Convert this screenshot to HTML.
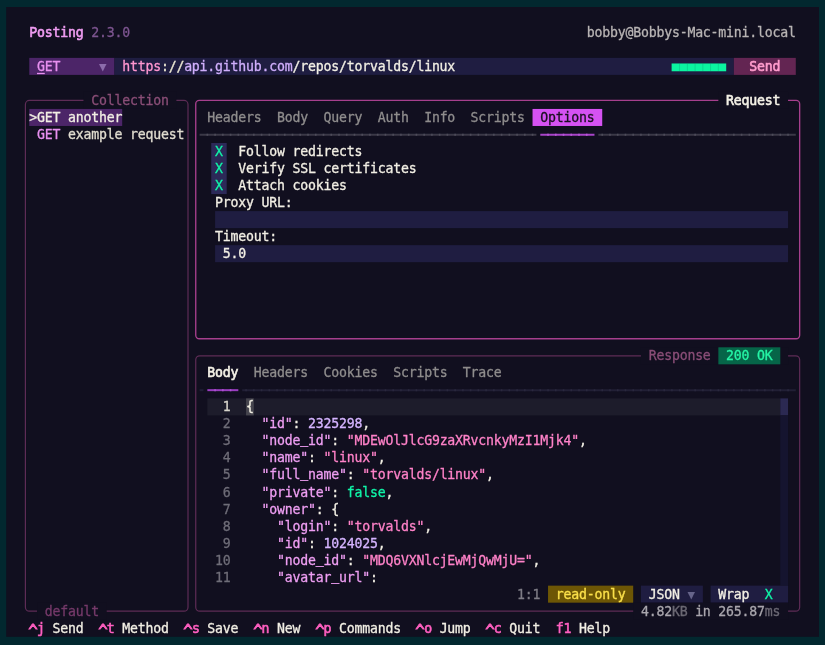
<!DOCTYPE html>
<html lang="en"><head><meta charset="utf-8"><title>Posting</title>
<style>
html,body{margin:0;padding:0;background:#02282f;}
body{width:825px;height:645px;overflow:hidden;position:relative;}
#term{position:absolute;left:0;top:0;width:825px;height:645px;overflow:hidden;
font-family:"DejaVu Sans Mono","Liberation Mono",monospace;font-size:13.2px;line-height:17.025px;}
#g{position:absolute;left:0;top:0;}
#tx{position:absolute;left:0;top:0;width:825px;height:645px;will-change:transform;}
.t{position:absolute;white-space:pre;-webkit-text-stroke:0.3px;height:17.025px;letter-spacing:-0.197px;}
.u{position:relative;top:-2px;}
.c{display:inline-block;transform:translateY(2.5px) scale(1.2,1.35);}
.bd{font-weight:normal;-webkit-text-stroke:0.6px;}
.tri{font-size:12.5px;letter-spacing:0;width:7.742px;text-align:center;-webkit-text-stroke:0;}
</style></head><body>
<div id="term">
<svg id="g" width="825" height="645" viewBox="0 0 825 645">
<rect x="6.2" y="7" width="812.8" height="629.8" fill="#110f1f"/>
<rect x="29.277" y="57.875" width="85.167" height="17.025" fill="#4c2568"/>
<rect x="37.02" y="72.837" width="7.742" height="1.3" fill="#e890f0"/>
<rect x="114.445" y="57.875" width="619.4" height="17.025" fill="#1f1d41"/>
<rect x="671.605" y="63.475" width="54.597" height="7.8" fill="#0bf5a0"/>
<rect x="679.147" y="63.475" width="0.9" height="7.8" fill="#0a8f6a" opacity="0.3"/>
<rect x="686.89" y="63.475" width="0.9" height="7.8" fill="#0a8f6a" opacity="0.3"/>
<rect x="694.632" y="63.475" width="0.9" height="7.8" fill="#0a8f6a" opacity="0.3"/>
<rect x="702.375" y="63.475" width="0.9" height="7.8" fill="#0a8f6a" opacity="0.3"/>
<rect x="710.117" y="63.475" width="0.9" height="7.8" fill="#0a8f6a" opacity="0.3"/>
<rect x="717.86" y="63.475" width="0.9" height="7.8" fill="#0a8f6a" opacity="0.3"/>
<rect x="733.845" y="57.875" width="61.94" height="17.025" fill="#632552"/>
<rect x="25.406" y="100.437" width="162.593" height="510.75" rx="4" fill="none" stroke="#5e2c56" stroke-width="1.2"/>
<rect x="83.475" y="91.925" width="92.91" height="17.025" fill="#110f1f"/>
<rect x="37.02" y="602.675" width="69.683" height="17.025" fill="#110f1f"/>
<rect x="29.277" y="108.95" width="92.91" height="17.025" fill="#4c2568"/>
<rect x="195.741" y="100.437" width="603.915" height="238.35" rx="3.5" fill="none" stroke="#a63f8d" stroke-width="1.35"/>
<rect x="718.36" y="91.925" width="69.683" height="17.025" fill="#110f1f"/>
<rect x="532.54" y="108.95" width="69.683" height="17.025" fill="#d552f2"/>
<line x1="199.613" y1="134.787" x2="536.411" y2="134.787" stroke="#3b3947" stroke-width="2"/>
<line x1="206.555" y1="134.787" x2="533.44" y2="134.787" stroke="#4e4c5a" stroke-width="2" stroke-dasharray="1.6 6.143"/>
<line x1="598.351" y1="134.787" x2="795.785" y2="134.787" stroke="#3b3947" stroke-width="2"/>
<line x1="601.423" y1="134.787" x2="788.942" y2="134.787" stroke="#4e4c5a" stroke-width="2" stroke-dasharray="1.6 6.143"/>
<line x1="540.282" y1="134.787" x2="594.48" y2="134.787" stroke="#a844c8" stroke-width="2"/>
<line x1="547.225" y1="134.787" x2="587.637" y2="134.787" stroke="#ba58da" stroke-width="2" stroke-dasharray="1.6 6.143"/>
<rect x="211.226" y="143" width="15.485" height="51.075" fill="#2c2958"/>
<rect x="215.097" y="211.1" width="572.945" height="17.025" fill="#1f1d41"/>
<rect x="215.097" y="245.15" width="572.945" height="17.025" fill="#1f1d41"/>
<rect x="195.741" y="355.812" width="603.915" height="255.375" rx="4" fill="none" stroke="#5e2c56" stroke-width="1.2"/>
<rect x="640.935" y="347.3" width="147.107" height="17.025" fill="#110f1f"/>
<rect x="718.36" y="347.3" width="61.94" height="17.025" fill="#066548"/>
<line x1="199.613" y1="390.162" x2="203.484" y2="390.162" stroke="#211f35" stroke-width="2"/>
<line x1="207.355" y1="390.162" x2="238.325" y2="390.162" stroke="#9a3ec0" stroke-width="2"/>
<line x1="214.297" y1="390.162" x2="231.483" y2="390.162" stroke="#ae52d2" stroke-width="2" stroke-dasharray="1.6 6.143"/>
<line x1="242.196" y1="390.162" x2="795.785" y2="390.162" stroke="#211f35" stroke-width="2"/>
<line x1="245.267" y1="390.162" x2="788.942" y2="390.162" stroke="#2a283e" stroke-width="2" stroke-dasharray="1.6 6.143"/>
<rect x="207.355" y="398.375" width="572.945" height="17.025" fill="#1d1c2b"/>
<rect x="780.3" y="398.375" width="7.742" height="17.025" fill="#2b2952"/>
<rect x="780.3" y="415.4" width="7.742" height="170.25" fill="#15142f"/>
<rect x="246.067" y="398.375" width="7.743" height="17.025" fill="#46454e"/>
<rect x="548.025" y="585.65" width="85.167" height="17.025" fill="#6d5605"/>
<rect x="640.935" y="585.65" width="61.94" height="17.025" fill="#1f1d41"/>
<rect x="710.617" y="585.65" width="77.425" height="17.025" fill="#1f1d41"/>
<rect x="633.192" y="602.675" width="154.85" height="17.025" fill="#110f1f"/>
</svg>
<div id="tx">
<span class="t bd" style="left:29.277px;top:23.825px;color:#ee9bf0;">Posting</span>
<span class="t" style="left:91.217px;top:23.825px;color:#7d5590;">2.3.0</span>
<span class="t" style="left:586.737px;top:23.825px;color:#b8b4b4;">bobby@Bobbys-Mac-mini.local</span>
<span class="t" style="left:37.02px;top:57.875px;color:#e890f0;">GET</span>
<span class="t tri" style="left:98.96px;top:57.875px;color:#8c6cab;">▼</span>
<span class="t" style="left:122.187px;top:57.875px;color:#ff96d0;">https</span>
<span class="t" style="left:160.9px;top:57.875px;color:#ebe7d2;">://</span>
<span class="t" style="left:184.127px;top:57.875px;color:#cfaefb;">api.github.com</span>
<span class="t" style="left:292.522px;top:57.875px;color:#f2efe4;">/repos/torvalds/linux</span>
<span class="t bd" style="left:749.33px;top:57.875px;color:#ff9ccd;">Send</span>
<span class="t" style="left:91.217px;top:91.925px;color:#8a4e77;">Collection</span>
<span class="t" style="left:44.762px;top:602.675px;color:#763a6a;">default</span>
<span class="t" style="left:29.277px;top:108.95px;color:#f2efe4;">&gt;</span>
<span class="t" style="left:37.02px;top:108.95px;color:#f2efe4;">GET</span>
<span class="t" style="left:67.99px;top:108.95px;color:#f2efe4;">another</span>
<span class="t" style="left:37.02px;top:125.975px;color:#e890f0;">GET</span>
<span class="t" style="left:67.99px;top:125.975px;color:#e0dccf;">example request</span>
<span class="t bd" style="left:726.102px;top:91.925px;color:#f4f1e6;">Request</span>
<span class="t" style="left:207.355px;top:108.95px;color:#8f8d8d;">Headers</span>
<span class="t" style="left:277.038px;top:108.95px;color:#8f8d8d;">Body</span>
<span class="t" style="left:323.493px;top:108.95px;color:#8f8d8d;">Query</span>
<span class="t" style="left:377.69px;top:108.95px;color:#8f8d8d;">Auth</span>
<span class="t" style="left:424.145px;top:108.95px;color:#8f8d8d;">Info</span>
<span class="t" style="left:470.6px;top:108.95px;color:#8f8d8d;">Scripts</span>
<span class="t" style="left:540.282px;top:108.95px;color:#1a1020;">Options</span>
<span class="t" style="left:215.097px;top:143px;color:#10f5a8;">X</span>
<span class="t" style="left:238.325px;top:143px;color:#f2efe4;">Follow redirects</span>
<span class="t" style="left:215.097px;top:160.025px;color:#10f5a8;">X</span>
<span class="t" style="left:238.325px;top:160.025px;color:#f2efe4;">Verify SSL certificates</span>
<span class="t" style="left:215.097px;top:177.05px;color:#10f5a8;">X</span>
<span class="t" style="left:238.325px;top:177.05px;color:#f2efe4;">Attach cookies</span>
<span class="t" style="left:215.097px;top:194.075px;color:#f2efe4;">Proxy URL:</span>
<span class="t" style="left:215.097px;top:228.125px;color:#f2efe4;">Timeout:</span>
<span class="t" style="left:222.84px;top:245.15px;color:#f2efe4;">5.0</span>
<span class="t" style="left:648.677px;top:347.3px;color:#8a4e77;">Response</span>
<span class="t" style="left:726.102px;top:347.3px;color:#26f5a6;">200 OK</span>
<span class="t bd" style="left:207.355px;top:364.325px;color:#f4f1e6;">Body</span>
<span class="t" style="left:253.81px;top:364.325px;color:#8f8d8d;">Headers</span>
<span class="t" style="left:323.493px;top:364.325px;color:#8f8d8d;">Cookies</span>
<span class="t" style="left:393.175px;top:364.325px;color:#8f8d8d;">Scripts</span>
<span class="t" style="left:462.858px;top:364.325px;color:#8f8d8d;">Trace</span>
<span class="t" style="left:215.097px;top:398.375px;color:#d8d5cc;"> 1</span>
<span class="t" style="left:246.067px;top:398.375px;color:#f2efe4;">{</span>
<span class="t" style="left:215.097px;top:415.4px;color:#6f6d78;"> 2</span>
<span class="t" style="left:261.553px;top:415.4px;color:#ee9ef2;">"id"</span>
<span class="t" style="left:292.522px;top:415.4px;color:#f2efe4;">:</span>
<span class="t" style="left:308.007px;top:415.4px;color:#d5b4ff;">2325298</span>
<span class="t" style="left:362.205px;top:415.4px;color:#f2efe4;">,</span>
<span class="t" style="left:215.097px;top:432.425px;color:#6f6d78;"> 3</span>
<span class="t" style="left:261.553px;top:432.425px;color:#ee9ef2;">"node<span class="u">_</span>id"</span>
<span class="t" style="left:331.235px;top:432.425px;color:#f2efe4;">:</span>
<span class="t" style="left:346.72px;top:432.425px;color:#ff82c8;">"MDEwOlJlcG9zaXRvcnkyMzI1Mjk4"</span>
<span class="t" style="left:578.995px;top:432.425px;color:#f2efe4;">,</span>
<span class="t" style="left:215.097px;top:449.45px;color:#6f6d78;"> 4</span>
<span class="t" style="left:261.553px;top:449.45px;color:#ee9ef2;">"name"</span>
<span class="t" style="left:308.007px;top:449.45px;color:#f2efe4;">:</span>
<span class="t" style="left:323.493px;top:449.45px;color:#ff82c8;">"linux"</span>
<span class="t" style="left:377.69px;top:449.45px;color:#f2efe4;">,</span>
<span class="t" style="left:215.097px;top:466.475px;color:#6f6d78;"> 5</span>
<span class="t" style="left:261.553px;top:466.475px;color:#ee9ef2;">"full<span class="u">_</span>name"</span>
<span class="t" style="left:346.72px;top:466.475px;color:#f2efe4;">:</span>
<span class="t" style="left:362.205px;top:466.475px;color:#ff82c8;">"torvalds/linux"</span>
<span class="t" style="left:486.085px;top:466.475px;color:#f2efe4;">,</span>
<span class="t" style="left:215.097px;top:483.5px;color:#6f6d78;"> 6</span>
<span class="t" style="left:261.553px;top:483.5px;color:#ee9ef2;">"private"</span>
<span class="t" style="left:331.235px;top:483.5px;color:#f2efe4;">:</span>
<span class="t" style="left:346.72px;top:483.5px;color:#10f5a8;">false</span>
<span class="t" style="left:385.433px;top:483.5px;color:#f2efe4;">,</span>
<span class="t" style="left:215.097px;top:500.525px;color:#6f6d78;"> 7</span>
<span class="t" style="left:261.553px;top:500.525px;color:#ee9ef2;">"owner"</span>
<span class="t" style="left:315.75px;top:500.525px;color:#f2efe4;">:</span>
<span class="t" style="left:331.235px;top:500.525px;color:#f2efe4;">{</span>
<span class="t" style="left:215.097px;top:517.55px;color:#6f6d78;"> 8</span>
<span class="t" style="left:277.038px;top:517.55px;color:#ee9ef2;">"login"</span>
<span class="t" style="left:331.235px;top:517.55px;color:#f2efe4;">:</span>
<span class="t" style="left:346.72px;top:517.55px;color:#ff82c8;">"torvalds"</span>
<span class="t" style="left:424.145px;top:517.55px;color:#f2efe4;">,</span>
<span class="t" style="left:215.097px;top:534.575px;color:#6f6d78;"> 9</span>
<span class="t" style="left:277.038px;top:534.575px;color:#ee9ef2;">"id"</span>
<span class="t" style="left:308.007px;top:534.575px;color:#f2efe4;">:</span>
<span class="t" style="left:323.493px;top:534.575px;color:#d5b4ff;">1024025</span>
<span class="t" style="left:377.69px;top:534.575px;color:#f2efe4;">,</span>
<span class="t" style="left:215.097px;top:551.6px;color:#6f6d78;">10</span>
<span class="t" style="left:277.038px;top:551.6px;color:#ee9ef2;">"node<span class="u">_</span>id"</span>
<span class="t" style="left:346.72px;top:551.6px;color:#f2efe4;">:</span>
<span class="t" style="left:362.205px;top:551.6px;color:#ff82c8;">"MDQ6VXNlcjEwMjQwMjU="</span>
<span class="t" style="left:532.54px;top:551.6px;color:#f2efe4;">,</span>
<span class="t" style="left:215.097px;top:568.625px;color:#6f6d78;">11</span>
<span class="t" style="left:277.038px;top:568.625px;color:#ee9ef2;">"avatar<span class="u">_</span>url"</span>
<span class="t" style="left:369.947px;top:568.625px;color:#f2efe4;">:</span>
<span class="t" style="left:517.055px;top:585.65px;color:#7f7d86;">1:1</span>
<span class="t" style="left:555.767px;top:585.65px;color:#fbe04a;">read-only</span>
<span class="t" style="left:648.677px;top:585.65px;color:#f2efe4;">JSON</span>
<span class="t tri" style="left:687.39px;top:585.65px;color:#66648a;">▼</span>
<span class="t" style="left:718.36px;top:585.65px;color:#f2efe4;">Wrap</span>
<span class="t" style="left:764.815px;top:585.65px;color:#10f5a8;">X</span>
<span class="t" style="left:640.935px;top:602.675px;color:#a9a6ad;">4.82</span>
<span class="t" style="left:671.905px;top:602.675px;color:#6b6873;">KB</span>
<span class="t" style="left:695.132px;top:602.675px;color:#a9a6ad;">in</span>
<span class="t" style="left:718.36px;top:602.675px;color:#a9a6ad;">265.87</span>
<span class="t" style="left:764.815px;top:602.675px;color:#6b6873;">ms</span>
<span class="t bd" style="left:29.277px;top:619.7px;color:#ff5fc0;"><span class="c">^</span>j</span>
<span class="t" style="left:52.505px;top:619.7px;color:#f2efe4;">Send</span>
<span class="t bd" style="left:98.96px;top:619.7px;color:#ff5fc0;"><span class="c">^</span>t</span>
<span class="t" style="left:122.187px;top:619.7px;color:#f2efe4;">Method</span>
<span class="t bd" style="left:184.127px;top:619.7px;color:#ff5fc0;"><span class="c">^</span>s</span>
<span class="t" style="left:207.355px;top:619.7px;color:#f2efe4;">Save</span>
<span class="t bd" style="left:253.81px;top:619.7px;color:#ff5fc0;"><span class="c">^</span>n</span>
<span class="t" style="left:277.038px;top:619.7px;color:#f2efe4;">New</span>
<span class="t bd" style="left:315.75px;top:619.7px;color:#ff5fc0;"><span class="c">^</span>p</span>
<span class="t" style="left:338.978px;top:619.7px;color:#f2efe4;">Commands</span>
<span class="t bd" style="left:416.402px;top:619.7px;color:#ff5fc0;"><span class="c">^</span>o</span>
<span class="t" style="left:439.63px;top:619.7px;color:#f2efe4;">Jump</span>
<span class="t bd" style="left:486.085px;top:619.7px;color:#ff5fc0;"><span class="c">^</span>c</span>
<span class="t" style="left:509.312px;top:619.7px;color:#f2efe4;">Quit</span>
<span class="t bd" style="left:555.767px;top:619.7px;color:#ff5fc0;">f1</span>
<span class="t" style="left:578.995px;top:619.7px;color:#f2efe4;">Help</span>
</div>
</div>
</body></html>
